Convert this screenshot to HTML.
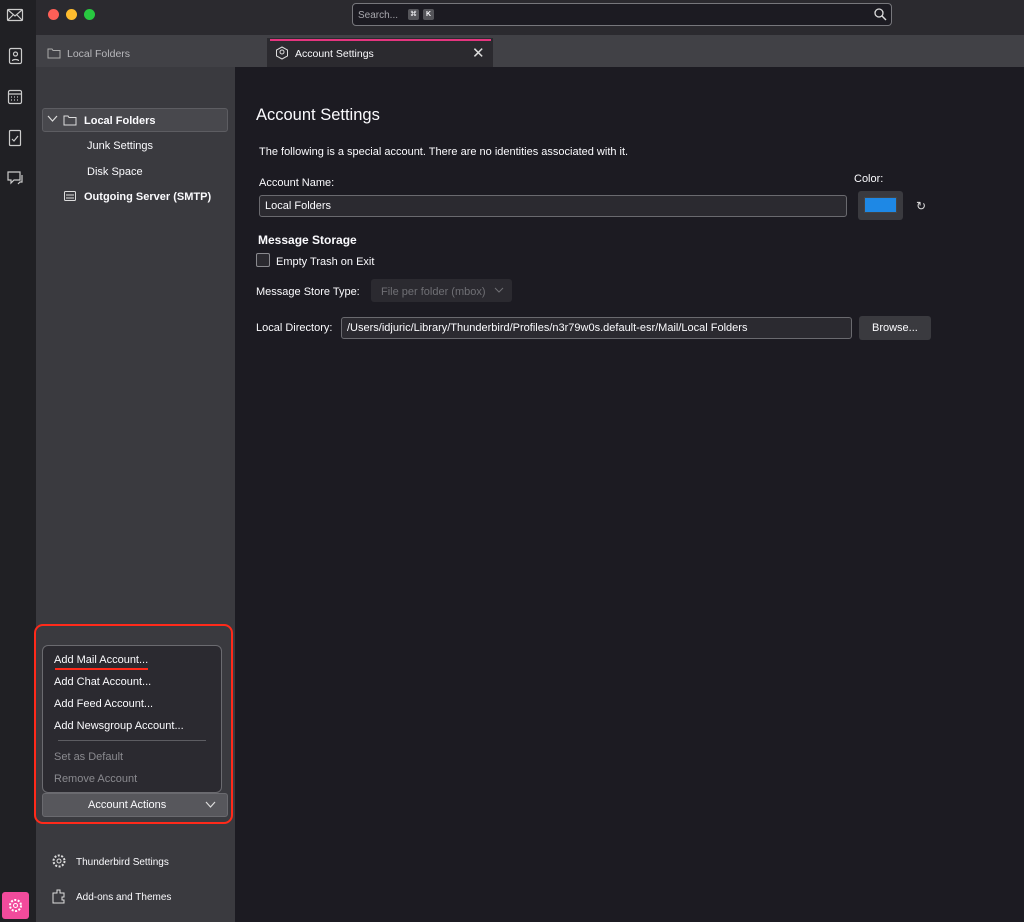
<!DOCTYPE html>
<html><head><meta charset="utf-8"><style>
*{box-sizing:border-box;margin:0;padding:0}
body{width:1024px;height:922px;background:#1c1b22;font-family:"Liberation Sans",sans-serif;color:#fbfbfe;position:relative;overflow:hidden;font-size:11px}
.abs{position:absolute}
svg{position:absolute}
</style></head><body>
<div class="abs" style="left:0;top:0;width:36px;height:922px;background:#202024"></div>
<div class="abs" style="left:36px;top:0;width:988px;height:35px;background:#2b2a2f"></div>
<div class="abs" style="left:48px;top:9px;width:11px;height:11px;border-radius:50%;background:#fe5f57"></div>
<div class="abs" style="left:66px;top:9px;width:11px;height:11px;border-radius:50%;background:#febc2e"></div>
<div class="abs" style="left:84px;top:9px;width:11px;height:11px;border-radius:50%;background:#28c840"></div>
<div class="abs" style="left:352px;top:3px;width:540px;height:23px;border:1px solid #77777c;border-radius:4px;background:#1c1b22"></div>
<div class="abs" style="left:358px;top:10px;color:#a8a8ae;font-size:10px">Search...</div>
<div class="abs" style="left:408px;top:9px;width:11px;height:11px;background:#55555a;border-radius:2px;font-size:7px;text-align:center;line-height:11px">⌘</div>
<div class="abs" style="left:423px;top:9px;width:11px;height:11px;background:#55555a;border-radius:2px;font-size:7px;text-align:center;line-height:11px;font-weight:bold">K</div>
<svg style="left:873px;top:7px" width="14" height="14" viewBox="0 0 14 14"><circle cx="6" cy="6" r="4" fill="none" stroke="#ddd" stroke-width="1.3"/><path d="M9 9l4 4" stroke="#ddd" stroke-width="1.4"/></svg>
<div class="abs" style="left:36px;top:35px;width:988px;height:32px;background:#414146"></div>
<svg style="left:47px;top:47px" width="14" height="12"><path d="M1 2h4l1 1.5h7v7.5h-12z" fill="none" stroke="#aaa"/></svg>
<div class="abs" style="left:67px;top:48px;color:#b8b8bc;font-size:10.5px">Local Folders</div>
<div class="abs" style="left:267px;top:38px;width:226px;height:29px;background:#2b2a2f"></div>
<div class="abs" style="left:270px;top:39px;width:221px;height:2px;background:#e5357f"></div>
<svg style="left:275px;top:46px" width="14" height="14"><path d="M7 1l5.5 3v6L7 13 1.5 10V4z" fill="none" stroke="#ddd"/><circle cx="7" cy="6" r="2" fill="none" stroke="#ddd"/></svg>
<div class="abs" style="left:295px;top:48px;font-size:10.5px">Account Settings</div>
<div class="abs" style="left:472px;top:44px;font-size:15px;color:#ddd">✕</div>
<div class="abs" style="left:36px;top:67px;width:199px;height:855px;background:#3a3a3f"></div>
<svg style="left:0;top:0" width="36" height="200">
<g fill="none" stroke="#ccc" stroke-width="1.2">
<rect x="7.5" y="9.5" width="15" height="11" rx="1"/><path d="M8 10l7 6 7-6M8 20l5-5M22 20l-5-5"/>
<rect x="9.5" y="48.5" width="12" height="15" rx="1.5"/><circle cx="15.5" cy="54" r="2"/><path d="M12.5 61c0-2 6-2 6 0"/>
<rect x="8.5" y="90.5" width="13" height="13" rx="1.5"/><path d="M9 94h12M11 97h1M14 97h1M17 97h1M11 100h1M14 100h1M17 100h1"/>
<rect x="9.5" y="130.5" width="11" height="15" rx="1"/><path d="M12 139l2 2 4-5"/>
<path d="M8 172h12v8h-6l-3 3v-3h-3z"/><path d="M22 175v7h-2l-2 2"/>
</g></svg>
<div class="abs" style="left:42px;top:108px;width:186px;height:24px;border:1px solid #5d5d62;border-radius:3px;background:#48484d"></div>
<svg style="left:47px;top:115px" width="11" height="8"><path d="M1 1l4.5 5L10 1" fill="none" stroke="#ddd" stroke-width="1.2"/></svg>
<svg style="left:63px;top:114px" width="14" height="12"><path d="M1 2h4l1 1.5h7v7.5h-12z" fill="none" stroke="#ddd"/></svg>
<div class="abs" style="left:84px;top:115px;font-weight:bold;font-size:11px">Local Folders</div>
<div class="abs" style="left:87px;top:140px;font-size:11px">Junk Settings</div>
<div class="abs" style="left:87px;top:166px;font-size:11px">Disk Space</div>
<svg style="left:63px;top:189px" width="15" height="15"><rect x="1.5" y="2.5" width="11" height="9" rx="1" fill="none" stroke="#ddd"/><path d="M3 6h8M3 9h8" stroke="#ddd"/></svg>
<div class="abs" style="left:84px;top:191px;font-weight:bold;font-size:11px">Outgoing Server (SMTP)</div>
<div class="abs" style="left:34px;top:624px;width:199px;height:200px;border:2px solid #ff2a1a;border-radius:9px"></div>
<div class="abs" style="left:42px;top:645px;width:180px;height:148px;background:#2b2a30;border:1px solid #6b6b70;border-radius:6px"></div>
<div class="abs" style="left:54px;top:649px;font-size:11px;line-height:22px">Add Mail Account...<br>Add Chat Account...<br>Add Feed Account...<br>Add Newsgroup Account...</div>
<div class="abs" style="left:55px;top:668px;width:93px;height:2px;background:#ff2a1a"></div>
<div class="abs" style="left:58px;top:740px;width:148px;height:1px;background:#5d5d62"></div>
<div class="abs" style="left:54px;top:746px;font-size:11px;line-height:22px;color:#8a8a8f">Set as Default<br>Remove Account</div>
<div class="abs" style="left:42px;top:793px;width:186px;height:24px;background:#57575c;border-radius:3px;border:1px solid #6a6a6f"></div>
<div class="abs" style="left:88px;top:799px;font-size:11px">Account Actions</div>
<svg style="left:205px;top:801px" width="11" height="8"><path d="M1 1l4.5 5L10 1" fill="none" stroke="#ddd" stroke-width="1.2"/></svg>
<svg style="left:51px;top:853px" width="16" height="16"><circle cx="8" cy="8" r="5.5" fill="none" stroke="#ddd" stroke-dasharray="2 1.5" stroke-width="2"/><circle cx="8" cy="8" r="2" fill="none" stroke="#ddd"/></svg>
<div class="abs" style="left:76px;top:857px;font-size:10px">Thunderbird Settings</div>
<svg style="left:51px;top:888px" width="16" height="16"><path d="M2 5h4V2h3v3h4v4h-2v3h2v3H2z" fill="none" stroke="#ddd"/></svg>
<div class="abs" style="left:76px;top:892px;font-size:10px">Add-ons and Themes</div>
<div class="abs" style="left:2px;top:892px;width:27px;height:27px;background:#f24b9c;border-radius:3px"></div>
<svg style="left:7px;top:897px" width="17" height="17"><circle cx="8.5" cy="8.5" r="5.5" fill="none" stroke="#fff" stroke-dasharray="2 1.5" stroke-width="2"/><circle cx="8.5" cy="8.5" r="2" fill="none" stroke="#fff"/></svg>
<div class="abs" style="left:256px;top:106px;font-size:16.5px">Account Settings</div>
<div class="abs" style="left:259px;top:146px;font-size:11px">The following is a special account. There are no identities associated with it.</div>
<div class="abs" style="left:259px;top:177px;font-size:11px">Account Name:</div>
<div class="abs" style="left:854px;top:173px;font-size:11px">Color:</div>
<div class="abs" style="left:259px;top:195px;width:588px;height:22px;border:1px solid #6a6a6f;border-radius:3px;background:#2b2a30"></div>
<div class="abs" style="left:265px;top:200px;font-size:11px">Local Folders</div>
<div class="abs" style="left:858px;top:191px;width:45px;height:29px;background:#3a3a3f;border-radius:3px"></div>
<div class="abs" style="left:864px;top:197px;width:33px;height:16px;background:#1e88e5;border:1px solid #444"></div>
<div class="abs" style="left:916px;top:199px;font-size:12px;color:#ddd">↻</div>
<div class="abs" style="left:258px;top:233px;font-size:12px;font-weight:bold">Message Storage</div>
<div class="abs" style="left:256px;top:253px;width:14px;height:14px;border:1px solid #8a8a8f;border-radius:2px;background:#2b2a30"></div>
<div class="abs" style="left:276px;top:256px;font-size:11px">Empty Trash on Exit</div>
<div class="abs" style="left:256px;top:286px;font-size:11px">Message Store Type:</div>
<div class="abs" style="left:371px;top:279px;width:141px;height:23px;background:#2b2a30;border-radius:3px"></div>
<div class="abs" style="left:381px;top:286px;font-size:11px;color:#6f6f74">File per folder (mbox)</div>
<svg style="left:494px;top:287px" width="10" height="7"><path d="M1 1l4 4 4-4" fill="none" stroke="#6f6f74"/></svg>
<div class="abs" style="left:256px;top:322px;font-size:11px">Local Directory:</div>
<div class="abs" style="left:341px;top:317px;width:511px;height:22px;border:1px solid #6a6a6f;border-radius:3px;background:#2b2a30"></div>
<div class="abs" style="left:347px;top:322px;font-size:11px">/Users/idjuric/Library/Thunderbird/Profiles/n3r79w0s.default-esr/Mail/Local Folders</div>
<div class="abs" style="left:859px;top:316px;width:72px;height:24px;background:#3a3a3f;border-radius:3px"></div>
<div class="abs" style="left:872px;top:322px;font-size:11px">Browse...</div>
</body></html>
